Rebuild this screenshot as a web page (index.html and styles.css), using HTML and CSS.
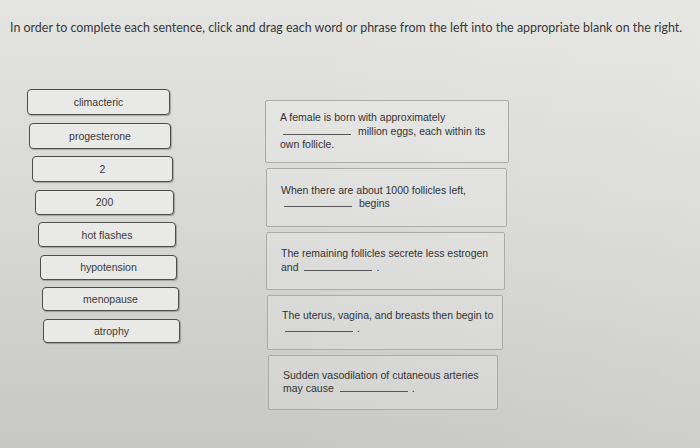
FILE: index.html
```html
<!DOCTYPE html>
<html lang="en">
<head>
<meta charset="utf-8">
<title>Matching</title>
<link rel="stylesheet" href="styles.css">
</head>
<body>
<p class="prompt">In order to complete each sentence, click and drag each word or phrase from the left into the appropriate blank on the right.</p>
<div class="workspace">
  <div class="bank">
    <div class="chip">climacteric</div>
    <div class="chip">progesterone</div>
    <div class="chip">2</div>
    <div class="chip">200</div>
    <div class="chip">hot flashes</div>
    <div class="chip">hypotension</div>
    <div class="chip">menopause</div>
    <div class="chip">atrophy</div>
  </div>
  <div class="targets">
    <div class="target"><p>A female is born with approximately <span class="blank"></span> million eggs, each within its own follicle.</p></div>
    <div class="target"><p>When there are about 1000 follicles left, <span class="blank"></span> begins</p></div>
    <div class="target"><p>The remaining follicles secrete less estrogen and <span class="blank"></span>.</p></div>
    <div class="target"><p>The uterus, vagina, and breasts then begin to <span class="blank"></span>.</p></div>
    <div class="target"><p>Sudden vasodilation of cutaneous arteries may cause <span class="blank"></span>.</p></div>
  </div>
</div>
</body>
</html>
```
FILE: styles.css
```css
html, body {
  margin: 0;
  height: 100%;
}

body {
  width: 700px;
  height: 448px;
  overflow: hidden;
  background:
    linear-gradient(90deg, rgba(255,255,255,0) 40%, rgba(255,255,255,0.12) 100%),
    linear-gradient(180deg, #e4e4e2 0%, #d9d9d7 45%, #c7c8c5 100%);
  font-family: "Liberation Sans", Arial, sans-serif;
  color: #333;
}

.prompt {
  margin: 0;
  padding: 20px 0 0 10px;
  font-family: "Lato", "Liberation Sans", sans-serif;
  font-size: 12.45px;
  line-height: 16px;
  color: #383838;
}

.workspace {
  display: flex;
  align-items: flex-start;
  padding-left: 27px;
}

.bank {
  width: 160px;
  margin-top: 53px;
  display: flex;
  flex-direction: column;
  gap: 7.5px;
}

.chip {
  box-sizing: border-box;
  width: 143px;
  height: 26px;
  display: flex;
  align-items: center;
  justify-content: center;
  border: 1.5px solid #4d4d4d;
  border-radius: 4px;
  background: #e9e9e7;
  box-shadow: 1px 1px 1px rgba(0,0,0,0.25);
  font-size: 10.5px;
  color: #3a3a3a;
}

.chip:nth-child(2) { margin-left: 2px; width: 142px; }
.chip:nth-child(3) { margin-left: 5px; width: 141px; }
.chip:nth-child(4) { margin-left: 8px; width: 139px; height: 25px; }
.chip:nth-child(5) { margin-left: 11px; width: 138px; height: 25px; }
.chip:nth-child(6) { margin-left: 13px; width: 137px; height: 25px; }
.chip:nth-child(7) { margin-left: 15px; width: 137px; height: 24px; }
.chip:nth-child(8) { margin-left: 16px; width: 137px; height: 24px; }

.targets {
  margin-top: 64px;
  margin-left: 78px;
  display: flex;
  flex-direction: column;
  gap: 5px;
}

.target {
  box-sizing: border-box;
  width: 244px;
  min-height: 57px;
  padding: 10px 10px 10px 14px;
  display: flex;
  align-items: center;
  border: 1.5px solid #ababab;
  border-radius: 2px;
  background: rgba(255,255,255,0.18);
}

.target:nth-child(1) { min-height: 62px; }
.target:nth-child(2) { margin-left: 1px; width: 241px; min-height: 59px; }
.target:nth-child(3) { margin-left: 1px; width: 239px; min-height: 58px; }
.target:nth-child(4) { margin-left: 2px; width: 236px; min-height: 55px; padding-right: 3px; }
.target:nth-child(5) { margin-left: 3px; width: 230px; min-height: 55px; }

.target p {
  margin: 0;
  font-size: 10.5px;
  line-height: 13.5px;
  color: #333;
}

.blank {
  display: inline-block;
  width: 68px;
  height: 9px;
  margin: 0 4px 0 3px;
  border-bottom: 1px solid #555;
  vertical-align: baseline;
}
```
